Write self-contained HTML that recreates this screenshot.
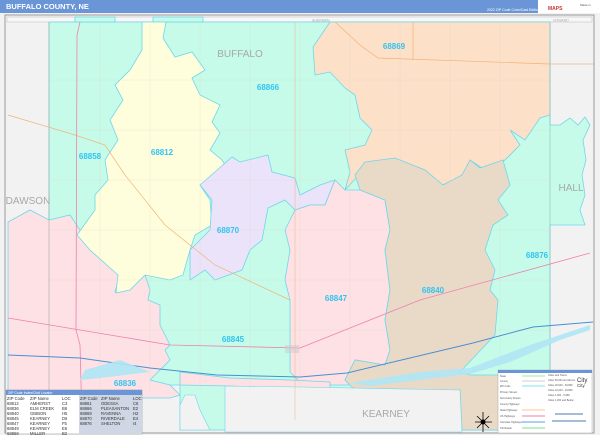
<!DOCTYPE html>
<html><head><meta charset="utf-8"><style>
html,body{margin:0;padding:0;width:600px;height:435px;overflow:hidden;background:#f2f2f2;font-family:"Liberation Sans",sans-serif}
</style></head><body>
<svg width="600" height="435" viewBox="0 0 600 435" xmlns="http://www.w3.org/2000/svg" font-family="Liberation Sans, sans-serif">
<rect x="0" y="0" width="600" height="435" fill="#f2f2f2"/>
<!-- header -->
<rect x="0" y="0" width="600" height="13" fill="#6a96d8"/>
<text x="6" y="9" font-size="7.5" font-weight="bold" fill="#fff">BUFFALO COUNTY, NE</text>
<text x="487" y="11" font-size="3.5" fill="#fff">2022 ZIP Code Color/Cast Edition</text>
<rect x="538" y="0" width="62" height="13" fill="#fff"/>
<text x="548" y="10" font-size="5" fill="#c33" font-weight="bold">MAPS</text>
<text x="580" y="6" font-size="3" fill="#555">Made in</text>
<!-- frame -->
<rect x="5" y="15" width="589" height="418" fill="#f2f2f2" stroke="#999" stroke-width="1"/>
<rect x="7" y="17" width="585" height="5" fill="#f7f7f7" stroke="#bbb" stroke-width=".5"/>
<text x="101" y="21.5" font-size="3.5" fill="#aaa">CUSTER</text>
<text x="312" y="21.5" font-size="3.5" fill="#aaa">SHERMAN</text>
<text x="553" y="21.5" font-size="3.5" fill="#aaa">HOWARD</text>
<!-- base green -->
<g stroke="#6fd6ea" stroke-width=".8">
<polygon fill="#c6fbe9" points="49,22 550,22 550,125 560,125 570,118 578,125 585,117 590,125 583,140 586,160 582,175 585,195 580,210 585,225 550,225 550,375 500,375 500,430 180,430 180,385 49,385"/>
<rect x="75" y="17" width="40" height="5" fill="#c6fbe9"/>
<rect x="153" y="17" width="50" height="5" fill="#c6fbe9"/>
<!-- pink left 68836 -->
<polygon fill="#fde1e4" points="8,222 30,210 49,220 70,215 80,230 90,250 120,275 115,292 130,290 145,275 150,290 148,300 160,305 160,325 170,345 165,350 170,360 150,380 170,385 180,395 170,398 8,398"/>
<!-- yellow 68812 -->
<polygon fill="#fffedc" points="142,22 166,22 163,38 175,57 192,52 205,70 192,78 200,95 220,105 212,122 220,133 210,150 222,160 230,172 200,185 210,200 212,225 195,235 190,250 183,275 170,280 145,275 130,290 116,293 118,275 90,250 77,235 95,210 95,195 108,180 105,160 118,140 110,120 123,100 115,85 130,70 142,50"/>
<!-- purple 68870 -->
<polygon fill="#ebe3fa" points="200,185 232,157 240,162 268,155 272,172 295,178 300,195 320,185 335,180 325,205 310,205 295,210 285,200 268,208 262,240 250,250 242,270 215,280 205,270 190,280 190,250 210,230 212,200"/>
<!-- pink 68847 -->
<polygon fill="#fde1e4" points="295,210 310,205 325,205 335,180 345,190 360,190 385,200 390,230 385,250 390,290 385,320 390,350 385,365 355,360 345,380 355,385 330,385 300,382 290,372 290,300 285,280 290,250 285,230"/>
<!-- peach 68869 -->
<polygon fill="#fde0c8" points="330,22 550,22 550,115 540,118 525,140 510,130 520,145 505,160 485,170 470,160 470,170 460,178 442,185 425,170 410,165 400,160 385,168 370,163 345,190 350,172 345,150 365,145 372,130 360,118 355,95 345,88 330,72 315,75 313,47"/>
<!-- beige 68840 -->
<polygon fill="#e9dac8" points="365,162 395,158 425,170 443,185 462,175 470,160 480,168 503,160 510,185 498,200 508,215 493,225 485,250 495,270 490,290 498,300 495,335 460,372 470,375 500,375 500,430 462,430 460,390 355,390 345,380 355,360 385,365 390,350 385,320 390,290 385,250 390,230 385,200 360,190 355,175"/>
<!-- river pink strip -->
<polygon fill="#fde1e4" points="180,372 230,378 290,380 330,382 330,390 230,386 180,385"/>
</g>
<!-- kearney gray area -->
<polygon fill="#f2f2f2" stroke="#6fd6ea" stroke-width=".6" points="225,386 300,387 460,390 462,432 225,432"/>
<polygon fill="#f2f2f2" stroke="#6fd6ea" stroke-width=".6" points="180,405 185,395 195,395 200,410 210,430 180,430"/>
<!-- county outline lines -->
<line x1="49" y1="22" x2="49" y2="395" stroke="#aaa" stroke-width=".6"/>
<line x1="550" y1="22" x2="550" y2="375" stroke="#9bb" stroke-width=".6"/>
<!-- grid faint -->
<g stroke="#e0d8c8" stroke-width=".4" opacity=".7">
<line x1="100" y1="22" x2="100" y2="390"/><line x1="150" y1="22" x2="150" y2="390"/><line x1="200" y1="22" x2="200" y2="390"/><line x1="250" y1="22" x2="250" y2="390"/><line x1="300" y1="22" x2="300" y2="390"/><line x1="350" y1="22" x2="350" y2="390"/><line x1="400" y1="22" x2="400" y2="390"/><line x1="450" y1="22" x2="450" y2="390"/><line x1="500" y1="22" x2="500" y2="390"/>
<line x1="49" y1="80" x2="550" y2="80"/><line x1="49" y1="130" x2="550" y2="130"/><line x1="49" y1="180" x2="550" y2="180"/><line x1="49" y1="230" x2="550" y2="230"/><line x1="49" y1="280" x2="550" y2="280"/><line x1="49" y1="330" x2="550" y2="330"/>
</g>
<!-- roads -->
<polyline fill="none" stroke="#f2b27a" stroke-width=".7" points="8,115 75,135 105,145 125,175 165,225 215,265 290,300"/>
<polyline fill="none" stroke="#f2b27a" stroke-width=".7" points="335,22 360,45 378,58 550,64 595,64"/>
<line x1="413" y1="22" x2="413" y2="60" stroke="#f2b27a" stroke-width=".7"/>
<line x1="295" y1="22" x2="295" y2="420" stroke="#f2b27a" stroke-width=".5"/>
<polyline fill="none" stroke="#f080b0" stroke-width=".8" points="80,22 77,35 76,330 80,345 82,420"/>
<polyline fill="none" stroke="#f080b0" stroke-width=".8" points="8,318 170,345 300,348 420,300 590,253"/>
<polyline fill="none" stroke="#4a90d0" stroke-width="1" points="8,355 80,358 150,368 217,375 300,377 347,373 410,358 473,343 533,327 593,322"/>
<!-- river -->
<polygon fill="#aee6f5" points="85,370 120,360 150,372 100,378 80,380" opacity=".9"/>
<polygon fill="#aee6f5" points="350,383 420,372 470,368 530,345 560,335 590,325 590,330 560,340 510,362 470,374 420,380 370,386" opacity=".9"/>
<!-- city dots -->
<rect x="285" y="345" width="14" height="8" fill="#ccc" opacity=".5"/>
<!-- zip labels -->
<g font-size="8" font-weight="bold" fill="#33c4f0" text-anchor="middle">
<text x="394" y="49">68869</text><text x="268" y="90">68866</text><text x="90" y="159">68858</text><text x="162" y="155">68812</text>
<text x="228" y="233">68870</text><text x="233" y="342">68845</text><text x="336" y="301">68847</text><text x="433" y="293">68840</text>
<text x="537" y="258">68876</text><text x="125" y="386">68836</text>
</g>
<g font-size="10" fill="#a8a8a8" text-anchor="middle">
<text x="240" y="57">BUFFALO</text><text x="28" y="204">DAWSON</text><text x="571" y="191">HALL</text><text x="386" y="417">KEARNEY</text>
</g>
<!-- left legend -->
<g font-size="4.2" fill="#333">
<rect x="6" y="390" width="136" height="44" fill="#fff" stroke="#888" stroke-width=".5"/>
<rect x="6" y="390" width="136" height="5" fill="#6a96d8"/>
<text x="8" y="394" fill="#fff" font-size="3.5">ZIP Code Index/Grid Locator</text>
<rect x="79" y="395" width="63" height="39" fill="#cfd6e4"/>
<text x="7" y="400">ZIP Code</text><text x="30" y="400">ZIP Name</text><text x="62" y="400">LOC</text>
<text x="80" y="400">ZIP Code</text><text x="101" y="400">ZIP Name</text><text x="133" y="400">LOC</text>
<text x="7" y="405">68812</text><text x="30" y="405">AMHERST</text><text x="62" y="405">C3</text>
<text x="7" y="410">68836</text><text x="30" y="410">ELM CREEK</text><text x="62" y="410">B6</text>
<text x="7" y="415">68840</text><text x="30" y="415">GIBBON</text><text x="62" y="415">H5</text>
<text x="7" y="420">68845</text><text x="30" y="420">KEARNEY</text><text x="62" y="420">D6</text>
<text x="7" y="425">68847</text><text x="30" y="425">KEARNEY</text><text x="62" y="425">F5</text>
<text x="7" y="430">68849</text><text x="30" y="430">KEARNEY</text><text x="62" y="430">E6</text>
<text x="7" y="435">68858</text><text x="30" y="435">MILLER</text><text x="62" y="435">B2</text>
<text x="80" y="405">68861</text><text x="101" y="405">ODESSA</text><text x="133" y="405">C6</text>
<text x="80" y="410">68866</text><text x="101" y="410">PLEASANTON</text><text x="133" y="410">E2</text>
<text x="80" y="415">68869</text><text x="101" y="415">RAVENNA</text><text x="133" y="415">H2</text>
<text x="80" y="420">68870</text><text x="101" y="420">RIVERDALE</text><text x="133" y="420">E4</text>
<text x="80" y="425">68876</text><text x="101" y="425">SHELTON</text><text x="133" y="425">I4</text>
</g>
<!-- right legend -->
<g font-size="2.5" fill="#555">
<rect x="498" y="370" width="94" height="63" fill="#fff" stroke="#999" stroke-width=".4"/>
<rect x="498" y="370" width="94" height="3" fill="#6a96d8"/>
<text x="500" y="377">State</text><line x1="522" y1="376" x2="545" y2="376" stroke="#9fe8a8"/>
<text x="500" y="382">County</text><line x1="522" y1="381" x2="545" y2="381" stroke="#ccc"/>
<text x="500" y="387">ZIP Code</text><line x1="522" y1="386" x2="545" y2="386" stroke="#80e0f0"/>
<text x="500" y="393">Primary Streets</text>
<text x="500" y="399">Secondary Streets</text>
<text x="500" y="405">County Highways</text>
<text x="500" y="411">State Highways</text><line x1="522" y1="410" x2="545" y2="410" stroke="#f8c890"/>
<text x="500" y="417">US Highways</text><line x1="522" y1="416" x2="545" y2="416" stroke="#f080b0"/>
<text x="500" y="423">Interstate Highways</text><line x1="522" y1="422" x2="545" y2="422" stroke="#90c0f0" stroke-width="1.5"/>
<text x="500" y="429">Toll Roads</text><line x1="522" y1="428" x2="545" y2="428" stroke="#80e080"/>
<text x="548" y="376">Cities and Towns</text>
<text x="548" y="381">Cities 50,000 and Above</text><text x="577" y="382" font-size="6" fill="#333">City</text>
<text x="548" y="386">Cities 20,000 - 49,999</text><text x="577" y="387" font-size="4.5" fill="#333">City</text>
<text x="548" y="391">Cities 10,000 - 19,999</text>
<text x="548" y="396">Cities 1,000 - 9,999</text>
<text x="548" y="401">Cities 1,000 and Below</text>
<line x1="555" y1="414" x2="583" y2="414" stroke="#4a7ab0"/>
<line x1="552" y1="421" x2="586" y2="421" stroke="#4a7ab0"/>
</g>
<!-- compass -->
<g stroke="#000" stroke-width=".8">
<line x1="483" y1="412" x2="483" y2="432"/><line x1="475" y1="422" x2="492" y2="422"/><line x1="477" y1="416" x2="489" y2="428"/><line x1="489" y1="416" x2="477" y2="428"/>
</g>
<circle cx="483" cy="422" r="2.5" fill="#000"/>
</svg>
</body></html>
